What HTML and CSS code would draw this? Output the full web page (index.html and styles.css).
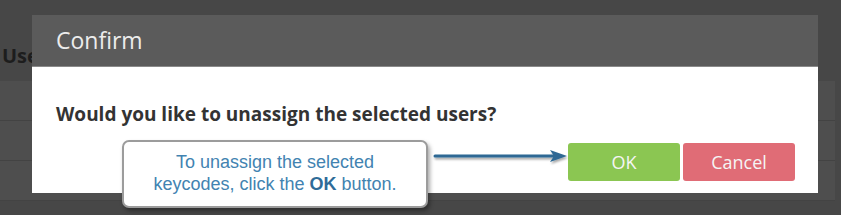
FILE: index.html
```html
<!DOCTYPE html>
<html lang="en">
<head>
    <meta charset="utf-8">
    <title>Confirm</title>
    <link rel="stylesheet" href="styles.css">
</head>
<body>
    <!-- Page behind the dialog (dimmed) -->
    <div class="page">
        <h2 class="page-title">Users</h2>
        <div class="user-table">
            <div class="user-row"></div>
            <div class="user-row"></div>
            <div class="user-row"></div>
        </div>
    </div>

    <!-- Confirm dialog -->
    <div class="modal">
        <div class="modal-header">Confirm</div>
        <div class="modal-body">
            <p class="question">Would you like to unassign the selected users?</p>
            <div class="actions">
                <button class="btn btn-ok">OK</button>
                <button class="btn btn-cancel">Cancel</button>
            </div>
        </div>
    </div>

    <!-- Help callout -->
    <div class="callout">
        To unassign the selected<br>
        keycodes, click the <strong>OK</strong> button.
    </div>
    <svg class="arrow" width="140" height="20" viewBox="0 0 140 20">
        <defs>
            <filter id="shadow" x="-10%" y="-50%" width="120%" height="200%">
                <feDropShadow dx="1" dy="2" stdDeviation="1.2" flood-color="#000" flood-opacity="0.35"/>
            </filter>
        </defs>
        <g filter="url(#shadow)">
            <line x1="3" y1="9" x2="124" y2="9" stroke="#2d6894" stroke-width="3" stroke-linecap="round"/>
            <path d="M118 3 L135 9 L118 15 L122 9 Z" fill="#2d6894"/>
        </g>
    </svg>
</body>
</html>
```

FILE: styles.css
```css
body {
    margin: 0;
    width: 841px;
    height: 215px;
    overflow: hidden;
    background-color: #474747;
    font-family: "Open Sans", "Liberation Sans", sans-serif;
    position: relative;
}

.page {
    width: 835px;
    padding-top: 43px;
}

    .page-title {
        margin: 0 0 12px 2px;
        font-size: 20px;
        font-weight: 700;
        color: #1d1d1d;
        line-height: 26px;
    }

    .user-table {
        background-color: #4e4e4e;
    }

        .user-row {
            height: 39px;
            border-bottom: 1px solid #434343;
        }

.modal {
    position: absolute;
    left: 32px;
    top: 15px;
    width: 786px;
}

    .modal-header {
        height: 51px;
        background-color: #5b5b5b;
        border-bottom: 1px solid #8a8a8a;
        color: #ececec;
        font-size: 23px;
        line-height: 51px;
        padding-left: 24px;
    }

    .modal-body {
        height: 126px;
        box-sizing: border-box;
        background-color: #fff;
        padding: 34px 23px 0 24px;
    }

        .modal-body .question {
            margin: 0;
            font-size: 19px;
            font-weight: 700;
            line-height: 26px;
            color: #333;
        }

    .actions {
        display: flex;
        justify-content: flex-end;
        gap: 3px;
        margin-top: 16px;
    }

.btn {
    width: 112px;
    height: 38px;
    border: none;
    border-radius: 3px;
    color: #f5f5f5;
    font-family: "Open Sans", "Liberation Sans", sans-serif;
    font-size: 18px;
    cursor: pointer;
}

.btn-ok {
    background-color: #8bc652;
}

.btn-cancel {
    background-color: #e06c76;
}

.callout {
    position: absolute;
    left: 122px;
    top: 140px;
    width: 306px;
    height: 68px;
    box-sizing: border-box;
    border: 2px solid #9c9c9c;
    border-radius: 7px;
    background-color: #fff;
    box-shadow: 2px 3px 4px rgba(0, 0, 0, 0.35);
    color: #4283b1;
    font-family: "Liberation Sans", Arial, sans-serif;
    font-size: 18px;
    line-height: 22px;
    text-align: center;
    padding-top: 9px;
}

    .callout strong {
        color: #2f6b98;
    }

.arrow {
    position: absolute;
    left: 432px;
    top: 147px;
}
```
